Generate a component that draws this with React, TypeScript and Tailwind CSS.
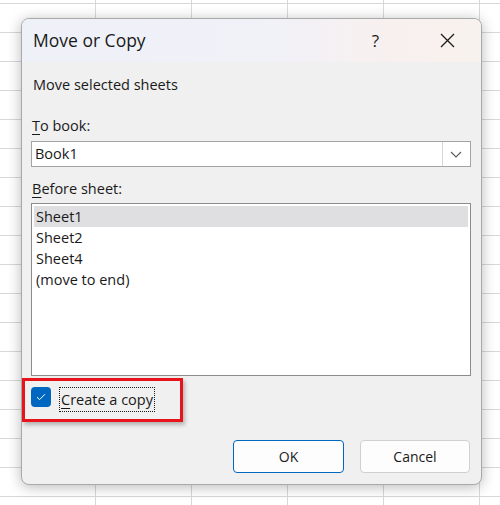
import React from "react";

const font = { fontFamily: '"Open Sans", "Noto Sans", sans-serif' };

function CloseIcon() {
  return (
    <svg width="15" height="15" viewBox="0 0 15 15" fill="none">
      <path d="M1 1L14 14M14 1L1 14" stroke="#1b1b1b" strokeWidth="1.3" />
    </svg>
  );
}

function Chevron() {
  return (
    <svg width="12" height="7" viewBox="0 0 12 7" fill="none">
      <path d="M1 1L6 6L11 1" stroke="#5c5c5c" strokeWidth="1.1" />
    </svg>
  );
}

function CheckBox() {
  return (
    <div className="flex h-[20px] w-[20px] items-center justify-center rounded-[4px] bg-[#0067c0]">
      <svg width="10" height="8" viewBox="0 0 10 8" fill="none">
        <path d="M1 4.2L3.6 6.6L9 1.2" stroke="#ffffff" strokeWidth="1" />
      </svg>
    </div>
  );
}

const sheets = ["Sheet1", "Sheet2", "Sheet4", "(move to end)"];

export default function App() {
  return (
    <div
      className="h-[505px] w-[500px] overflow-hidden bg-white bg-[linear-gradient(to_right,transparent_95px,#d8d8d8_95px,#d8d8d8_96px,transparent_96px),linear-gradient(to_bottom,transparent_3px,#d8d8d8_3px,#d8d8d8_4px,transparent_4px)] bg-[length:96px_29px] pl-[21px] pt-[18px] text-[#1a1a1a]"
      style={font}
    >
      <div className="flex h-[467px] w-[461px] flex-col overflow-hidden rounded-[8px] border border-[#a9a9a9] bg-[#f0f0f0] shadow-[0_2px_14px_rgba(0,0,0,0.28)]">
        {/* title bar */}
        <div className="flex h-[43px] shrink-0 items-center bg-[linear-gradient(90deg,#eff1f8_0%,#f1f1f8_55%,#f8f0ef_80%,#f8f2ee_100%)] pl-[11px]">
          <span className="text-[17.5px] leading-none">Move or Copy</span>
          <span className="ml-auto mr-[61px] text-[17px] leading-none">?</span>
          <div className="mr-[26px] flex items-center">
            <CloseIcon />
          </div>
        </div>

        {/* body */}
        <div className="flex flex-1 flex-col pl-[9px] pr-[10px] text-[14.5px]">
          <div className="mt-[13px] pl-[2px] leading-[20px]">Move selected sheets</div>

          <div className="mt-[21px] pl-[1px] leading-[20px]">
            <span className="underline underline-offset-[3px]">T</span>o book:
          </div>

          <div className="mt-[5px] flex h-[26px] w-[440px] items-center border border-[#a4a4a4] bg-white">
            <span className="pl-[3px] leading-[20px]">Book1</span>
            <div className="ml-auto mr-px flex h-[24px] w-[27px] items-center justify-center border-l border-[#d6d6d6] bg-white">
              <Chevron />
            </div>
          </div>

          <div className="mt-[12px] pl-[1px] leading-[20px]">
            <span className="underline underline-offset-[3px]">B</span>efore sheet:
          </div>

          <div className="mt-[4px] flex h-[173px] w-[440px] flex-col border border-[#8c8c8c] bg-white px-[2px] pt-[2px]">
            {sheets.map((s, i) => (
              <div
                key={s}
                className={
                  i === 0
                    ? "h-[21px] bg-[#dfdfe1] pl-[2px] leading-[21px]"
                    : "h-[21px] pl-[2px] leading-[21px]"
                }
              >
                {s}
              </div>
            ))}
          </div>

          {/* highlighted option */}
          <div className="ml-[-9px] mt-[2px] flex h-[44px] w-[161px] items-start border-[3px] border-[#e8141b] pl-[6px] pt-[6px] shadow-[2px_3px_4px_rgba(0,0,0,0.25)]">
            <CheckBox />
            <div className="ml-[8px] flex h-[25px] items-center border border-dotted border-[#1a1a1a] pl-px pr-px leading-[20px]">
              <span className="underline underline-offset-[3px]">C</span>reate a copy
            </div>
          </div>

          <div className="mt-[18px] flex justify-end gap-[16px] pr-[1px]">
            <button className="h-[33px] w-[111px] rounded-[4px] border border-[#0067c0] bg-[#fdfdfd] text-[14px]">
              OK
            </button>
            <button className="h-[33px] w-[110px] rounded-[4px] border border-[#d0d0d0] bg-[#fdfdfd] text-[14px]">
              Cancel
            </button>
          </div>
        </div>
      </div>
    </div>
  );
}
